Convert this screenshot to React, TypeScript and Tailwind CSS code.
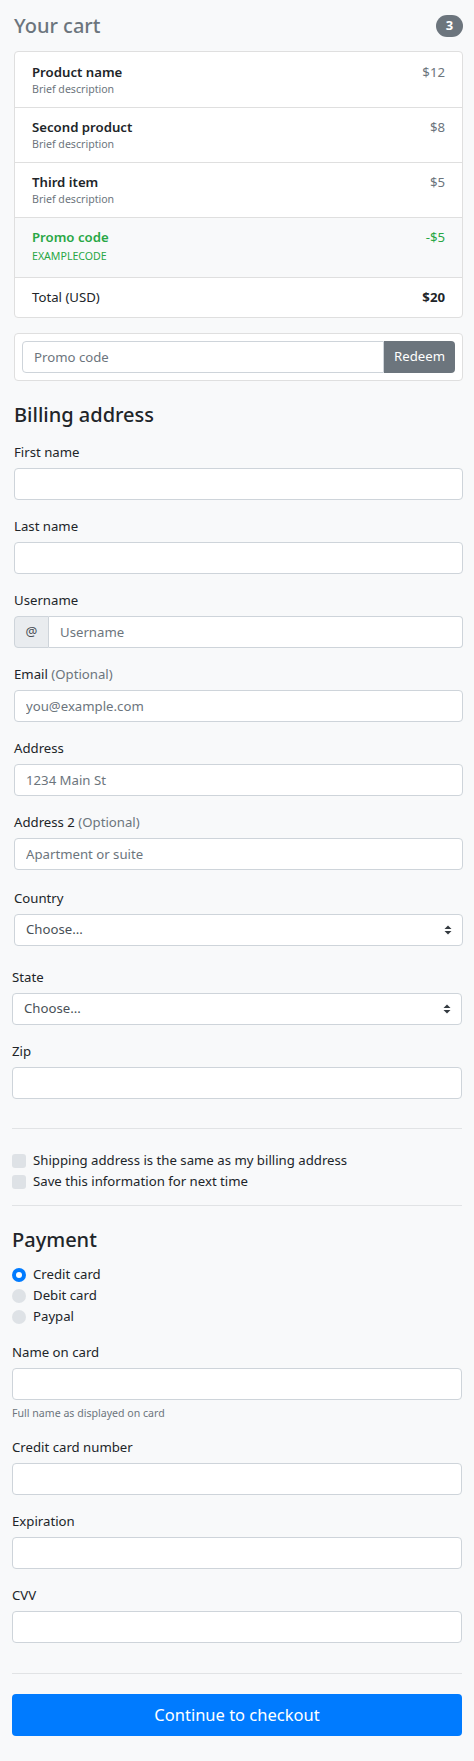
import React from "react";

const inputCls =
  "block w-full h-[32px] border border-[#ced4da] rounded-[4px] bg-white px-[11px] text-[13.2px] text-[#495057] placeholder:text-[#6c757d] outline-none";

function Label({ children }: { children: React.ReactNode }) {
  return <div className="text-[13.2px] leading-[20px] text-[#212529]">{children}</div>;
}

function Field({
  label,
  placeholder,
  className = "",
}: {
  label: React.ReactNode;
  placeholder?: string;
  className?: string;
}) {
  return (
    <div className={className}>
      <Label>{label}</Label>
      <input className={"mt-[6px] " + inputCls} placeholder={placeholder} />
    </div>
  );
}

function SelectBox() {
  return (
    <div className="mt-[6px] flex h-[32px] w-full items-center justify-between rounded-[4px] border border-[#ced4da] bg-white pl-[11px] pr-[10px] text-[13.2px] text-[#495057]">
      <span>Choose...</span>
      <svg width="8" height="10" viewBox="0 0 8 10">
        <path d="M4 0.5 L7.5 4 L0.5 4 Z" fill="#343a40" />
        <path d="M4 9.5 L7.5 6 L0.5 6 Z" fill="#343a40" />
      </svg>
    </div>
  );
}

function Optional() {
  return <span className="text-[#6c757d]">(Optional)</span>;
}

export default function App() {
  const items = [
    { name: "Product name", price: "$12", h: "h-[56px]", pt: "pt-[11px]" },
    { name: "Second product", price: "$8", h: "h-[55px]", pt: "pt-[10px]" },
    { name: "Third item", price: "$5", h: "h-[55px]", pt: "pt-[10px]" },
  ];
  return (
    <div className="min-h-screen bg-[#f8f9fa] pb-[25px] font-['Noto_Sans','Open_Sans',sans-serif] text-[#212529]">
      <div className="pl-[14px] pr-[11px] pt-[15px]">
        <div className="flex h-[22px] items-center justify-between">
          <h4 className="text-[20px] font-medium leading-[22px] text-[#6c757d]">Your cart</h4>
          <span className="flex h-[22px] w-[27px] items-center justify-center rounded-full bg-[#6c757d] text-[13px] font-bold text-white">
            3
          </span>
        </div>

        <ul className="mt-[14px] rounded-[4px] border border-[#dfdfdf] bg-white">
          {items.map((it) => (
            <li
              key={it.name}
              className={`flex justify-between border-b border-[#dfdfdf] px-[17px] ${it.h} ${it.pt}`}
            >
              <div>
                <div className="text-[13.2px] font-semibold leading-[18px]">{it.name}</div>
                <div className="text-[10.6px] leading-[16px] text-[#6c757d]">Brief description</div>
              </div>
              <span className="text-[13.2px] leading-[18px] text-[#6c757d]">{it.price}</span>
            </li>
          ))}
          <li className="flex h-[60px] justify-between border-b border-[#dfdfdf] bg-[#f8f9fa] px-[17px] pt-[10px] text-[#28a745]">
            <div>
              <div className="text-[13.2px] font-semibold leading-[18px]">Promo code</div>
              <div className="mt-[2px] text-[10.6px] leading-[16px]">EXAMPLECODE</div>
            </div>
            <span className="text-[13.2px] leading-[18px]">-$5</span>
          </li>
          <li className="flex h-[39px] items-center justify-between px-[17px] text-[13.2px]">
            <span>Total (USD)</span>
            <strong className="font-bold">$20</strong>
          </li>
        </ul>

        <div className="mt-[15px] flex h-[48px] rounded-[4px] border border-[#dfdfdf] bg-white p-[7px]">
          <input
            className="h-[32px] min-w-0 flex-1 rounded-l-[4px] border border-[#ced4da] px-[11px] text-[13.2px] placeholder:text-[#6c757d] outline-none"
            placeholder="Promo code"
          />
          <button className="h-[32px] w-[71px] rounded-r-[4px] bg-[#6c757d] text-[13.2px] text-white">
            Redeem
          </button>
        </div>

        <h4 className="mt-[21px] text-[20px] font-medium leading-[26px]">Billing address</h4>

        <div className="pt-[14px]">
          <Field label="First name" />
          <Field label="Last name" className="mt-[16px]" />
          <div className="mt-[16px]">
            <Label>Username</Label>
            <div className="mt-[6px] flex h-[32px]">
              <span className="flex w-[35px] items-center justify-center rounded-l-[4px] border border-[#ced4da] bg-[#e9ecef] text-[13.2px] text-[#495057]">
                @
              </span>
              <input
                className="h-[32px] min-w-0 flex-1 rounded-r-[4px] border border-l-0 border-[#ced4da] bg-white px-[11px] text-[13.2px] placeholder:text-[#6c757d] outline-none"
                placeholder="Username"
              />
            </div>
          </div>
          <Field
            label={
              <>
                Email <Optional />
              </>
            }
            placeholder="you@example.com"
            className="mt-[16px]"
          />
          <Field label="Address" placeholder="1234 Main St" className="mt-[16px]" />
          <Field
            label={
              <>
                Address 2 <Optional />
              </>
            }
            placeholder="Apartment or suite"
            className="mt-[16px]"
          />
          <div className="mt-[18px]">
            <Label>Country</Label>
            <SelectBox />
          </div>
        </div>
      </div>

      <div className="pl-[12px] pr-[12px] pt-[21px]">
        <Label>State</Label>
        <SelectBox />
        <Field label="Zip" className="mt-[16px]" />

        <div className="mt-[29px] h-px bg-[#e1e3e5]" />

        <div className="mt-[21px] text-[13.2px] leading-[21px]">
          <div className="flex items-center">
            <span className="mr-[7px] h-[14px] w-[14px] rounded-[3px] bg-[#dee2e6]" />
            Shipping address is the same as my billing address
          </div>
          <div className="flex items-center">
            <span className="mr-[7px] h-[14px] w-[14px] rounded-[3px] bg-[#dee2e6]" />
            Save this information for next time
          </div>
        </div>

        <div className="mt-[13px] h-px bg-[#e1e3e5]" />

        <h4 className="mt-[21px] text-[20px] font-medium leading-[26px]">Payment</h4>

        <div className="mt-[11px] text-[13.2px] leading-[21px]">
          <div className="flex items-center">
            <span className="mr-[7px] flex h-[14px] w-[14px] items-center justify-center rounded-full bg-[#007bff]">
              <span className="h-[6px] w-[6px] rounded-full bg-white" />
            </span>
            Credit card
          </div>
          <div className="flex items-center">
            <span className="mr-[7px] h-[14px] w-[14px] rounded-full bg-[#dee2e6]" />
            Debit card
          </div>
          <div className="flex items-center">
            <span className="mr-[7px] h-[14px] w-[14px] rounded-full bg-[#dee2e6]" />
            Paypal
          </div>
        </div>

        <Field label="Name on card" className="mt-[15px]" />
        <div className="mt-[5px] text-[10.6px] leading-[16px] text-[#6c757d]">Full name as displayed on card</div>
        <Field label="Credit card number" className="mt-[16px]" />
        <Field label="Expiration" className="mt-[16px]" />
        <Field label="CVV" className="mt-[16px]" />

        <div className="mt-[30px] h-px bg-[#e1e3e5]" />

        <button className="mt-[20px] flex h-[42px] w-full items-center justify-center rounded-[4px] bg-[#007bff] text-[16.5px] text-white">
          Continue to checkout
        </button>
      </div>
    </div>
  );
}
